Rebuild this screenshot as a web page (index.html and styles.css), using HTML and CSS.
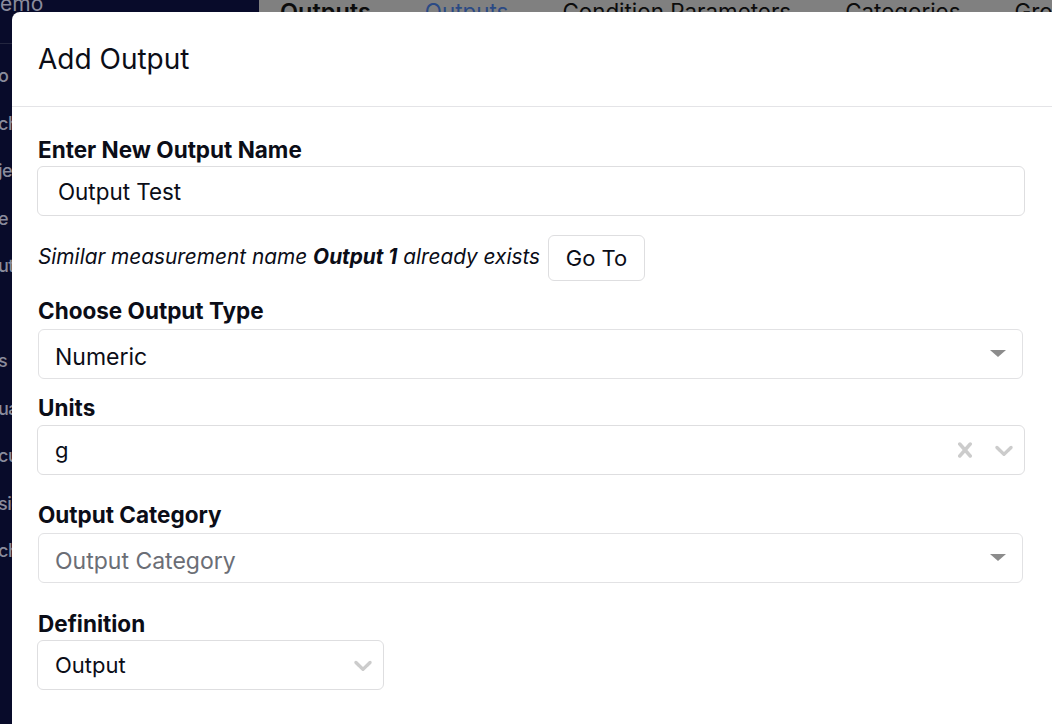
FILE: index.html
```html
<!DOCTYPE html>
<html lang="en">
<head>
<meta charset="utf-8">
<title>Add Output</title>
<link rel="stylesheet" href="styles.css">
</head>
<body>
<div class="app">
  <aside class="sidebar">
    <div class="brand">emo</div>
    <nav class="nav">
      <div class="nav-item">o</div>
      <div class="nav-item">ch</div>
      <div class="nav-item">je</div>
      <div class="nav-item">e</div>
      <div class="nav-item">ut</div>
      <div class="nav-item"></div>
      <div class="nav-item">s</div>
      <div class="nav-item">ua</div>
      <div class="nav-item">cu</div>
      <div class="nav-item">sig</div>
      <div class="nav-item">ch</div>
    </nav>
  </aside>
  <main class="main">
    <div class="tabs">
      <span class="tab tab-strong">Outputs</span>
      <span class="tab tab-active">Outputs</span>
      <span class="tab">Condition Parameters</span>
      <span class="tab">Categories</span>
      <span class="tab">Groups</span>
    </div>
  </main>
</div>

<div class="modal">
  <div class="modal-header">Add Output</div>
  <div class="modal-body">
    <div class="field">
      <label class="label">Enter New Output Name</label>
      <input class="text-input" type="text" value="Output Test">
    </div>

    <div class="hint-row">
      <span class="hint">Similar measurement name <b>Output 1</b> already exists</span>
      <button class="btn" type="button">Go To</button>
    </div>

    <div class="field field-type">
      <label class="label">Choose Output Type</label>
      <div class="select select-native">
        <span class="select-value">Numeric</span>
        <span class="caret"></span>
      </div>
    </div>

    <div class="field field-units">
      <label class="label">Units</label>
      <div class="select select-rs">
        <span class="select-value">g</span>
        <span class="indicators">
          <svg class="ind-icon" viewBox="0 0 20 20" width="30" height="30"><path d="M14.348 14.849c-0.469 0.469-1.229 0.469-1.697 0l-2.651-3.030-2.651 3.029c-0.469 0.469-1.229 0.469-1.697 0-0.469-0.469-0.469-1.229 0-1.697l2.758-3.15-2.759-3.152c-0.469-0.469-0.469-1.228 0-1.697s1.228-0.469 1.697 0l2.652 3.031 2.651-3.031c0.469-0.469 1.228-0.469 1.697 0s0.469 1.229 0 1.697l-2.758 3.152 2.758 3.15c0.469 0.469 0.469 1.229 0 1.698z"/></svg>
          <svg class="ind-icon" viewBox="0 0 20 20" width="30" height="30"><path d="M4.516 7.548c0.436-0.446 1.043-0.481 1.576 0l3.908 3.747 3.908-3.747c0.533-0.481 1.141-0.446 1.574 0 0.436 0.445 0.408 1.197 0 1.615-0.406 0.418-4.695 4.502-4.695 4.502-0.217 0.223-0.502 0.335-0.787 0.335s-0.57-0.112-0.789-0.335c0 0-4.287-4.084-4.695-4.502s-0.436-1.170 0-1.615z"/></svg>
        </span>
      </div>
    </div>

    <div class="field field-category">
      <label class="label">Output Category</label>
      <div class="select select-native">
        <span class="select-value placeholder">Output Category</span>
        <span class="caret"></span>
      </div>
    </div>

    <div class="field field-definition">
      <label class="label">Definition</label>
      <div class="select select-rs select-small">
        <span class="select-value">Output</span>
        <span class="indicators">
          <svg class="ind-icon" viewBox="0 0 20 20" width="30" height="30"><path d="M4.516 7.548c0.436-0.446 1.043-0.481 1.576 0l3.908 3.747 3.908-3.747c0.533-0.481 1.141-0.446 1.574 0 0.436 0.445 0.408 1.197 0 1.615-0.406 0.418-4.695 4.502-4.695 4.502-0.217 0.223-0.502 0.335-0.787 0.335s-0.57-0.112-0.789-0.335c0 0-4.287-4.084-4.695-4.502s-0.436-1.170 0-1.615z"/></svg>
        </span>
      </div>
    </div>
  </div>
</div>
</body>
</html>
```

FILE: styles.css
```css
* { box-sizing: border-box; }

html, body {
  margin: 0;
  padding: 0;
}

body {
  width: 1052px;
  height: 724px;
  overflow: hidden;
  font-family: Inter, "Noto Sans", "Liberation Sans", sans-serif;
  color: #0b0d17;
  background: #808080;
  position: relative;
}

.app {
  display: flex;
  height: 724px;
}

.sidebar {
  width: 259px;
  flex-shrink: 0;
  background: #080b2a;
  color: #8a8b9c;
}

.brand {
  height: 52px;
  margin-top: -8px;
  border-bottom: 1px solid #23263f;
  font-size: 21px;
  line-height: 24px;
  white-space: nowrap;
}

.nav {
  padding-top: 8px;
}

.nav-item {
  height: 47.5px;
  line-height: 47.5px;
  font-size: 18px;
  font-weight: 500;
  text-indent: -2px;
  letter-spacing: -0.5px;
  white-space: nowrap;
}

.main {
  flex: 1;
  background: #808080;
}

.tabs {
  display: flex;
  align-items: baseline;
  gap: 54px;
  padding-left: 21px;
  margin-top: -3px;
  font-size: 22.4px;
  font-weight: 400;
  color: #0c0c0c;
  white-space: nowrap;
}

.tab-strong {
  font-size: 23.5px;
  font-weight: 600;
}

.tab-active {
  color: #2b4a85;
}

.modal {
  position: absolute;
  left: 12px;
  top: 12px;
  width: 1060px;
  height: 760px;
  background: #ffffff;
  border-radius: 8px 8px 0 0;
}

.modal-header {
  height: 95px;
  display: flex;
  align-items: center;
  padding: 0 26px;
  border-bottom: 1px solid #e4e4e7;
  font-size: 28px;
  font-weight: 400;
  color: #0b0d17;
}

.modal-body {
  padding: 31px 47px 0 25px;
}

.field {
  display: flex;
  flex-direction: column;
}

.label {
  font-size: 22.5px;
  line-height: 24px;
  font-weight: 700;
  padding-left: 1px;
  margin-bottom: 4px;
}

.text-input {
  height: 50px;
  width: 100%;
  border: 1px solid #dedee0;
  border-radius: 6px;
  padding: 0 0 0 20px;
  font: inherit;
  font-size: 22.4px;
  color: #0b0d17;
  background: #fff;
  outline: none;
}

.hint-row {
  display: flex;
  align-items: center;
  gap: 8px;
  margin-top: 19px;
}

.hint {
  font-size: 20.8px;
  font-style: italic;
  padding-left: 1px;
  color: #0b0d17;
  margin-top: -3px;
}

.hint b {
  font-weight: 700;
}

.btn {
  width: 97px;
  height: 46px;
  border: 1px solid #dedee0;
  border-radius: 6px;
  background: #fff;
  font: inherit;
  font-size: 22px;
  color: #0b0d17;
  padding: 0;
}

.select {
  height: 50px;
  display: flex;
  align-items: center;
  border: 1px solid #dedee0;
  border-radius: 6px;
  background: #fff;
  font-size: 22px;
}

.select-value {
  flex: 1;
  padding-left: 17px;
}

.placeholder {
  color: #6b6e76;
}

.select-native {
  margin: 2px 2px 0 1px;
  border-color: #e2e2e4;
  font-size: 23px;
}

.select-native .select-value {
  padding-left: 16px;
  padding-top: 5px;
}

.caret {
  width: 0;
  height: 0;
  border-left: 8px solid transparent;
  border-right: 8px solid transparent;
  border-top: 7px solid #8c8c8c;
  margin-right: 16px;
  margin-top: -2px;
}

.indicators {
  display: flex;
  align-items: center;
  gap: 9px;
  padding-right: 5px;
}

.ind-icon {
  fill: #cccccc;
  display: block;
}

.field-type { margin-top: 18px; }
.field-units { margin-top: 17px; }
.field-units .label { margin-bottom: 5px; }
.field-category { margin-top: 28px; }
.field-category .label { margin-bottom: 4px; }
.field-definition { margin-top: 29px; }
.field-definition .label { margin-bottom: 4px; }

.select-small {
  width: 347px;
}
```
